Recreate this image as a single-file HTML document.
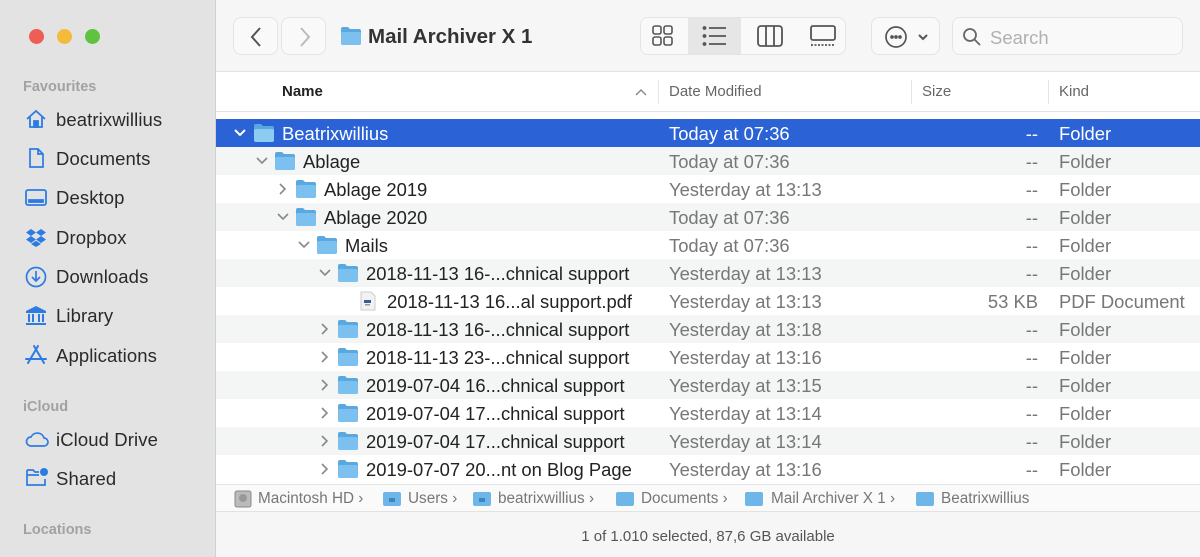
<!DOCTYPE html>
<html><head><meta charset="utf-8"><style>
*{margin:0;padding:0;box-sizing:border-box}
body{width:1200px;height:557px;overflow:hidden;background:#fff;font-family:"Liberation Sans",sans-serif;position:relative}
.sb{position:absolute;left:0;top:0;width:216px;height:557px;background:#e3e3e3;border-right:1px solid #d0d0d0}
.sb .sec{position:absolute;left:23px;font-size:14.5px;color:#a2a2a2;font-weight:bold}
.sb .it{position:absolute;left:56px;font-size:18.5px;color:#2a2a2a;letter-spacing:0.1px}
.sb svg{position:absolute;left:25px}
.dot{position:absolute;top:29px;width:15px;height:15px;border-radius:50%}
.tb{position:absolute;left:216px;top:0;width:984px;height:72px;background:#f6f6f6;border-bottom:1px solid #e2e2e2}
.btn{position:absolute;top:17px;height:38px;border:1px solid #e4e4e4;border-radius:8px;background:#f9f9f9}
.hdr{position:absolute;left:216px;top:72px;width:984px;height:40px;background:#fff;border-bottom:1px solid #e2e2e2;font-size:15px;color:#666}
.hdr span{position:absolute;top:11px}
.sep{position:absolute;top:8px;width:1px;height:24px;background:#e4e4e4}
.row{position:absolute;left:216px;width:984px;height:28px;font-size:18.4px;color:#222}
.row.g{background:#f4f5f5}
.row.s{background:#2b62d5;color:#fff}
.row .n{position:absolute;top:4px;white-space:nowrap}
.row .d{position:absolute;left:453px;top:4px;color:#777}
.row .z{position:absolute;right:162px;top:4px;color:#777}
.row .k{position:absolute;left:843px;top:4px;color:#777}
.row.s .d,.row.s .z,.row.s .k{color:#fff}
.row svg{position:absolute}
.pb{position:absolute;left:216px;top:484px;width:984px;height:28px;background:#fafafa;border-top:1px solid #e4e4e4;border-bottom:1px solid #e2e2e2;font-size:15.3px;color:#777}
.pb span{position:absolute;top:5px;white-space:nowrap}
.pb svg{position:absolute;top:7px}
.st{position:absolute;left:216px;top:512px;width:984px;height:45px;background:#f6f6f6;font-size:15px;color:#555;text-align:center;padding-top:16px}
</style></head><body>

<div class="sb">
 <div class="dot" style="left:29px;background:#ee5e56"></div>
 <div class="dot" style="left:57px;background:#f4bb3b"></div>
 <div class="dot" style="left:85px;background:#5fc340"></div>
 <div class="sec" style="top:79px">Favourites</div>
 <svg style="top:109px" width="22" height="20" viewBox="0 0 22 20" fill="none" stroke="#2c7be5" stroke-width="1.8"><path d="M2 10 L11 2 L20 10 M5 8 V18 H17 V8"/><rect x="9" y="12" width="4" height="6" fill="#2c7be5"/></svg>
 <div class="it" style="top:109px">beatrixwillius</div>
 <svg style="top:148px;left:28px" width="16" height="20" viewBox="0 0 16 20" fill="none" stroke="#2c7be5" stroke-width="1.7"><path d="M2 1 H10 L15 6 V19 H2 Z M10 1 V6 H15"/></svg>
 <div class="it" style="top:148px">Documents</div>
 <svg style="top:189px" width="22" height="18" viewBox="0 0 22 18" fill="none" stroke="#2c7be5" stroke-width="1.8"><rect x="1" y="1" width="20" height="15" rx="2"/><rect x="4" y="11" width="14" height="2" fill="#2c7be5"/></svg>
 <div class="it" style="top:187px">Desktop</div>
 <svg style="top:228px" width="22" height="20" viewBox="0 0 22 20" fill="#2c7be5"><path d="M6 1 L11 4.5 L6 8 L1 4.5Z M16 1 L21 4.5 L16 8 L11 4.5Z M6 8 L11 11.5 L6 15 L1 11.5Z M16 8 L21 11.5 L16 15 L11 11.5Z M6 16 L11 12.8 L16 16 L11 19Z"/></svg>
 <div class="it" style="top:227px">Dropbox</div>
 <svg style="top:266px" width="22" height="22" viewBox="0 0 22 22" fill="none" stroke="#2c7be5" stroke-width="1.7"><circle cx="11" cy="11" r="9.5"/><path d="M11 5 V15 M7 11 L11 15 L15 11"/></svg>
 <div class="it" style="top:266px">Downloads</div>
 <svg style="top:306px" width="22" height="20" viewBox="0 0 22 20" fill="#2c7be5"><path d="M11 0 L21 5 V7 H1 V5Z M3 8 H5 V16 H3Z M7 8 H9 V16 H7Z M13 8 H15 V16 H13Z M17 8 H19 V16 H17Z M1 17 H21 V19 H1Z"/></svg>
 <div class="it" style="top:305px">Library</div>
 <svg style="top:344px" width="22" height="22" viewBox="0 0 22 22" fill="none" stroke="#2c7be5" stroke-width="2" stroke-linecap="round"><path d="M9 2 L19 19 M13 2 L3 19 M1 15 H21"/></svg>
 <div class="it" style="top:345px">Applications</div>
 <div class="sec" style="top:399px">iCloud</div>
 <svg style="top:430px" width="24" height="18" viewBox="0 0 24 18" fill="none" stroke="#2c7be5" stroke-width="1.7"><path d="M6 16 H19 A4 4 0 0 0 19 8 A7 7 0 0 0 6 7 A4.5 4.5 0 0 0 6 16Z"/></svg>
 <div class="it" style="top:429px">iCloud Drive</div>
 <svg style="top:467px" width="24" height="20" viewBox="0 0 24 20" fill="none" stroke="#2c7be5" stroke-width="1.7"><path d="M2 3 H8 L10 5 H14 M2 3 V18 H20 V12 M2 8 H14"/><circle cx="19" cy="5" r="4" fill="#2c7be5" stroke="none"/></svg>
 <div class="it" style="top:468px">Shared</div>
 <div class="sec" style="top:522px">Locations</div>
</div>

<div class="tb">
 <div class="btn" style="left:17px;width:45px"><svg width="45" height="38" viewBox="0 0 45 38" fill="none" stroke="#555" stroke-width="2"><path d="M26 10 L18 19 L26 28"/></svg></div>
 <div class="btn" style="left:65px;width:45px"><svg width="45" height="38" viewBox="0 0 45 38" fill="none" stroke="#bbb" stroke-width="2"><path d="M19 10 L27 19 L19 28"/></svg></div>
 <svg style="position:absolute;left:124px;top:26px" width="22" height="20" viewBox="0 0 22 20"><path d="M1 3 Q1 1 3 1 H8 L10 3 H19 Q21 3 21 5 V17 Q21 19 19 19 H3 Q1 19 1 17Z" fill="#5aa8e0"/><rect x="1" y="6" width="20" height="13" rx="2" fill="#7cc0ef"/></svg>
 <div style="position:absolute;left:152px;top:25px;font-size:20.5px;font-weight:bold;color:#333">Mail Archiver X 1</div>
 <div class="btn" style="left:424px;width:206px"></div>
 <div style="position:absolute;left:472px;top:18px;width:53px;height:36px;background:#e6e6e6"></div>
 <div style="position:absolute;left:595px;top:24px;width:1px;height:24px;background:#e2e2e2"></div>
 <svg style="position:absolute;left:435px;top:24px" width="24" height="24" viewBox="0 0 24 24" fill="none" stroke="#555" stroke-width="1.6"><rect x="2" y="2" width="8" height="8" rx="2"/><rect x="13" y="2" width="8" height="8" rx="2"/><rect x="2" y="13" width="8" height="8" rx="2"/><rect x="13" y="13" width="8" height="8" rx="2"/></svg>
 <svg style="position:absolute;left:486px;top:24px" width="26" height="24" viewBox="0 0 26 24" fill="none" stroke="#555" stroke-width="1.8"><path d="M7 4 H24 M7 12 H24 M7 20 H24"/><circle cx="2.5" cy="4" r="1" fill="#555"/><circle cx="2.5" cy="12" r="1" fill="#555"/><circle cx="2.5" cy="20" r="1" fill="#555"/></svg>
 <svg style="position:absolute;left:540px;top:24px" width="28" height="24" viewBox="0 0 28 24" fill="none" stroke="#555" stroke-width="1.8"><rect x="2" y="2" width="24" height="20" rx="3"/><path d="M10 2 V22 M18 2 V22"/></svg>
 <svg style="position:absolute;left:592px;top:24px" width="30" height="24" viewBox="0 0 30 24" fill="none" stroke="#555" stroke-width="1.8"><rect x="3" y="2" width="24" height="14" rx="2"/><path d="M3 21 H27" stroke-dasharray="2 1.5"/></svg>
 <div class="btn" style="left:655px;width:69px"><svg width="69" height="38" viewBox="0 0 69 38" fill="none" stroke="#555" stroke-width="1.7"><circle cx="24" cy="19" r="10"/><circle cx="20" cy="19" r="1" fill="#555"/><circle cx="24" cy="19" r="1" fill="#555"/><circle cx="28" cy="19" r="1" fill="#555"/><path d="M47 17 L51 21 L55 17" stroke-width="2"/></svg></div>
 <div class="btn" style="left:736px;width:231px"><svg style="position:absolute;left:8px;top:8px" width="22" height="22" viewBox="0 0 22 22" fill="none" stroke="#666" stroke-width="1.8"><circle cx="9" cy="9" r="6"/><path d="M13.5 13.5 L19 19"/></svg><span style="position:absolute;left:37px;top:9px;font-size:18.5px;color:#b0b0b0">Search</span></div>
</div>

<div class="hdr">
 <span style="left:66px;font-weight:bold;color:#222">Name</span>
 <svg style="position:absolute;left:419px;top:16px" width="12" height="8" viewBox="0 0 12 8" fill="none" stroke="#888" stroke-width="1.4"><path d="M1 7 L6 2 L11 7"/></svg>
 <div class="sep" style="left:442px"></div><span style="left:453px">Date Modified</span>
 <div class="sep" style="left:695px"></div><span style="left:706px">Size</span>
 <div class="sep" style="left:832px"></div><span style="left:843px">Kind</span>
</div>

<div class="row s" style="top:119px"><svg style="left:17px;top:9px" width="14" height="10" viewBox="0 0 14 10" fill="none" stroke="#fff" stroke-width="2"><path d="M2 2 L7 7 L12 2"/></svg><svg style="left:37px;top:4px" width="22" height="20" viewBox="0 0 22 20"><path d="M1 3 Q1 1 3 1 H8 L10 3 H19 Q21 3 21 5 V17 Q21 19 19 19 H3 Q1 19 1 17Z" fill="#5aa8e0"/><rect x="1" y="6" width="20" height="13" rx="2" fill="#8ccbf2"/></svg><span class="n" style="left:66px">Beatrixwillius</span><span class="d">Today at 07:36</span><span class="z">--</span><span class="k">Folder</span></div>

<div class="row g" style="top:147px"><svg style="left:39px;top:9px" width="14" height="10" viewBox="0 0 14 10" fill="none" stroke="#888" stroke-width="1.6"><path d="M2 2 L7 7 L12 2"/></svg><svg style="left:58px;top:4px" width="22" height="20" viewBox="0 0 22 20"><path d="M1 3 Q1 1 3 1 H8 L10 3 H19 Q21 3 21 5 V17 Q21 19 19 19 H3 Q1 19 1 17Z" fill="#5aa8e0"/><rect x="1" y="6" width="20" height="13" rx="2" fill="#7cc0ef"/></svg><span class="n" style="left:87px">Ablage</span><span class="d">Today at 07:36</span><span class="z">--</span><span class="k">Folder</span></div>

<div class="row" style="top:175px"><svg style="left:62px;top:7px" width="10" height="14" viewBox="0 0 10 14" fill="none" stroke="#888" stroke-width="1.6"><path d="M2 2 L7 7 L2 12"/></svg><svg style="left:79px;top:4px" width="22" height="20" viewBox="0 0 22 20"><path d="M1 3 Q1 1 3 1 H8 L10 3 H19 Q21 3 21 5 V17 Q21 19 19 19 H3 Q1 19 1 17Z" fill="#5aa8e0"/><rect x="1" y="6" width="20" height="13" rx="2" fill="#7cc0ef"/></svg><span class="n" style="left:108px">Ablage 2019</span><span class="d">Yesterday at 13:13</span><span class="z">--</span><span class="k">Folder</span></div>

<div class="row g" style="top:203px"><svg style="left:60px;top:9px" width="14" height="10" viewBox="0 0 14 10" fill="none" stroke="#888" stroke-width="1.6"><path d="M2 2 L7 7 L12 2"/></svg><svg style="left:79px;top:4px" width="22" height="20" viewBox="0 0 22 20"><path d="M1 3 Q1 1 3 1 H8 L10 3 H19 Q21 3 21 5 V17 Q21 19 19 19 H3 Q1 19 1 17Z" fill="#5aa8e0"/><rect x="1" y="6" width="20" height="13" rx="2" fill="#7cc0ef"/></svg><span class="n" style="left:108px">Ablage 2020</span><span class="d">Today at 07:36</span><span class="z">--</span><span class="k">Folder</span></div>

<div class="row" style="top:231px"><svg style="left:81px;top:9px" width="14" height="10" viewBox="0 0 14 10" fill="none" stroke="#888" stroke-width="1.6"><path d="M2 2 L7 7 L12 2"/></svg><svg style="left:100px;top:4px" width="22" height="20" viewBox="0 0 22 20"><path d="M1 3 Q1 1 3 1 H8 L10 3 H19 Q21 3 21 5 V17 Q21 19 19 19 H3 Q1 19 1 17Z" fill="#5aa8e0"/><rect x="1" y="6" width="20" height="13" rx="2" fill="#7cc0ef"/></svg><span class="n" style="left:129px">Mails</span><span class="d">Today at 07:36</span><span class="z">--</span><span class="k">Folder</span></div>

<div class="row g" style="top:259px"><svg style="left:102px;top:9px" width="14" height="10" viewBox="0 0 14 10" fill="none" stroke="#888" stroke-width="1.6"><path d="M2 2 L7 7 L12 2"/></svg><svg style="left:121px;top:4px" width="22" height="20" viewBox="0 0 22 20"><path d="M1 3 Q1 1 3 1 H8 L10 3 H19 Q21 3 21 5 V17 Q21 19 19 19 H3 Q1 19 1 17Z" fill="#5aa8e0"/><rect x="1" y="6" width="20" height="13" rx="2" fill="#7cc0ef"/></svg><span class="n" style="left:150px">2018-11-13 16-...chnical support</span><span class="d">Yesterday at 13:13</span><span class="z">--</span><span class="k">Folder</span></div>

<div class="row" style="top:287px"><svg style="left:144px;top:4px" width="16" height="20" viewBox="0 0 16 20"><path d="M1 1 H11 L15 5 V19 H1Z" fill="#f2f2f2" stroke="#ccc"/><rect x="4" y="9" width="7" height="3" fill="#3b5b9c"/><rect x="5" y="13" width="5" height="1.5" fill="#999"/></svg><span class="n" style="left:171px">2018-11-13 16...al support.pdf</span><span class="d">Yesterday at 13:13</span><span class="z">53 KB</span><span class="k">PDF Document</span></div>

<div class="row g" style="top:315px"><svg style="left:104px;top:7px" width="10" height="14" viewBox="0 0 10 14" fill="none" stroke="#888" stroke-width="1.6"><path d="M2 2 L7 7 L2 12"/></svg><svg style="left:121px;top:4px" width="22" height="20" viewBox="0 0 22 20"><path d="M1 3 Q1 1 3 1 H8 L10 3 H19 Q21 3 21 5 V17 Q21 19 19 19 H3 Q1 19 1 17Z" fill="#5aa8e0"/><rect x="1" y="6" width="20" height="13" rx="2" fill="#7cc0ef"/></svg><span class="n" style="left:150px">2018-11-13 16-...chnical support</span><span class="d">Yesterday at 13:18</span><span class="z">--</span><span class="k">Folder</span></div>

<div class="row" style="top:343px"><svg style="left:104px;top:7px" width="10" height="14" viewBox="0 0 10 14" fill="none" stroke="#888" stroke-width="1.6"><path d="M2 2 L7 7 L2 12"/></svg><svg style="left:121px;top:4px" width="22" height="20" viewBox="0 0 22 20"><path d="M1 3 Q1 1 3 1 H8 L10 3 H19 Q21 3 21 5 V17 Q21 19 19 19 H3 Q1 19 1 17Z" fill="#5aa8e0"/><rect x="1" y="6" width="20" height="13" rx="2" fill="#7cc0ef"/></svg><span class="n" style="left:150px">2018-11-13 23-...chnical support</span><span class="d">Yesterday at 13:16</span><span class="z">--</span><span class="k">Folder</span></div>

<div class="row g" style="top:371px"><svg style="left:104px;top:7px" width="10" height="14" viewBox="0 0 10 14" fill="none" stroke="#888" stroke-width="1.6"><path d="M2 2 L7 7 L2 12"/></svg><svg style="left:121px;top:4px" width="22" height="20" viewBox="0 0 22 20"><path d="M1 3 Q1 1 3 1 H8 L10 3 H19 Q21 3 21 5 V17 Q21 19 19 19 H3 Q1 19 1 17Z" fill="#5aa8e0"/><rect x="1" y="6" width="20" height="13" rx="2" fill="#7cc0ef"/></svg><span class="n" style="left:150px">2019-07-04 16...chnical support</span><span class="d">Yesterday at 13:15</span><span class="z">--</span><span class="k">Folder</span></div>

<div class="row" style="top:399px"><svg style="left:104px;top:7px" width="10" height="14" viewBox="0 0 10 14" fill="none" stroke="#888" stroke-width="1.6"><path d="M2 2 L7 7 L2 12"/></svg><svg style="left:121px;top:4px" width="22" height="20" viewBox="0 0 22 20"><path d="M1 3 Q1 1 3 1 H8 L10 3 H19 Q21 3 21 5 V17 Q21 19 19 19 H3 Q1 19 1 17Z" fill="#5aa8e0"/><rect x="1" y="6" width="20" height="13" rx="2" fill="#7cc0ef"/></svg><span class="n" style="left:150px">2019-07-04 17...chnical support</span><span class="d">Yesterday at 13:14</span><span class="z">--</span><span class="k">Folder</span></div>

<div class="row g" style="top:427px"><svg style="left:104px;top:7px" width="10" height="14" viewBox="0 0 10 14" fill="none" stroke="#888" stroke-width="1.6"><path d="M2 2 L7 7 L2 12"/></svg><svg style="left:121px;top:4px" width="22" height="20" viewBox="0 0 22 20"><path d="M1 3 Q1 1 3 1 H8 L10 3 H19 Q21 3 21 5 V17 Q21 19 19 19 H3 Q1 19 1 17Z" fill="#5aa8e0"/><rect x="1" y="6" width="20" height="13" rx="2" fill="#7cc0ef"/></svg><span class="n" style="left:150px">2019-07-04 17...chnical support</span><span class="d">Yesterday at 13:14</span><span class="z">--</span><span class="k">Folder</span></div>

<div class="row" style="top:455px"><svg style="left:104px;top:7px" width="10" height="14" viewBox="0 0 10 14" fill="none" stroke="#888" stroke-width="1.6"><path d="M2 2 L7 7 L2 12"/></svg><svg style="left:121px;top:4px" width="22" height="20" viewBox="0 0 22 20"><path d="M1 3 Q1 1 3 1 H8 L10 3 H19 Q21 3 21 5 V17 Q21 19 19 19 H3 Q1 19 1 17Z" fill="#5aa8e0"/><rect x="1" y="6" width="20" height="13" rx="2" fill="#7cc0ef"/></svg><span class="n" style="left:150px">2019-07-07 20...nt on Blog Page</span><span class="d">Yesterday at 13:16</span><span class="z">--</span><span class="k">Folder</span></div>

<div class="pb">
 <svg style="left:18px;top:5px" width="18" height="18" viewBox="0 0 18 18"><rect x="1" y="1" width="16" height="16" rx="2" fill="#bbb" stroke="#888"/><circle cx="9" cy="8" r="4" fill="#999"/></svg>
 <span style="left:42px">Macintosh HD ›</span>
 <svg style="left:167px" width="18" height="14" viewBox="0 0 18 14"><rect x="0" y="0" width="18" height="14" rx="2" fill="#6fb6e8"/><rect x="6" y="6" width="6" height="4" fill="#3a86c4"/></svg>
 <span style="left:192px">Users ›</span>
 <svg style="left:257px" width="18" height="14" viewBox="0 0 18 14"><rect x="0" y="0" width="18" height="14" rx="2" fill="#6fb6e8"/><rect x="6" y="6" width="6" height="4" fill="#3a86c4"/></svg>
 <span style="left:282px">beatrixwillius ›</span>
 <svg style="left:400px" width="18" height="14" viewBox="0 0 18 14"><rect x="0" y="0" width="18" height="14" rx="2" fill="#6fb6e8"/></svg>
 <span style="left:425px">Documents ›</span>
 <svg style="left:529px" width="18" height="14" viewBox="0 0 18 14"><rect x="0" y="0" width="18" height="14" rx="2" fill="#6fb6e8"/></svg>
 <span style="left:555px">Mail Archiver X 1 ›</span>
 <svg style="left:700px" width="18" height="14" viewBox="0 0 18 14"><rect x="0" y="0" width="18" height="14" rx="2" fill="#6fb6e8"/></svg>
 <span style="left:725px">Beatrixwillius</span>
</div>
<div class="st">1 of 1.010 selected, 87,6 GB available</div>
</body></html>
